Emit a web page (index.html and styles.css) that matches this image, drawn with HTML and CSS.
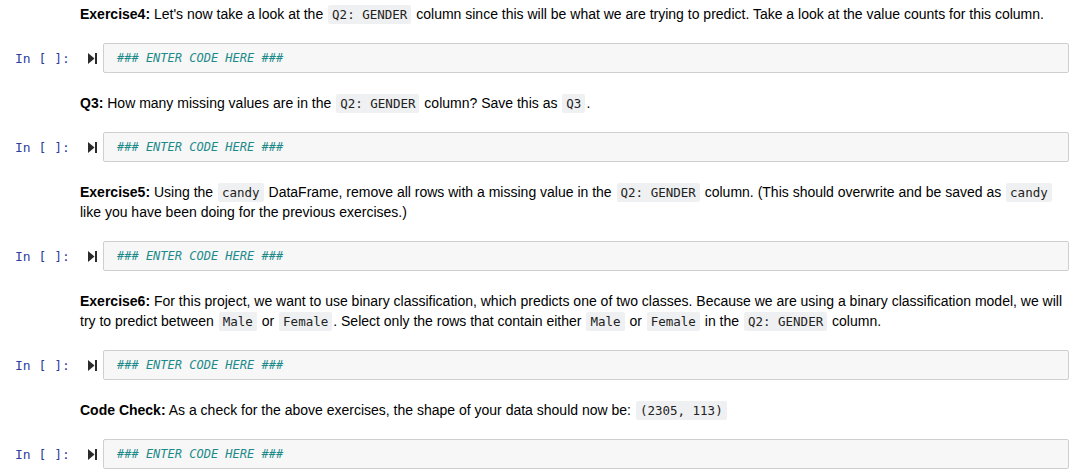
FILE: index.html
```html
<!DOCTYPE html>
<html>
<head>
<meta charset="utf-8">
<link rel="stylesheet" href="styles.css">
</head>
<body>
<div class="notebook">
  <div class="md">
    <p><b>Exercise4:</b> Let's now take a look at the <code>Q2: GENDER</code> column since this will be what we are trying to predict. Take a look at the value counts for this column.</p>
  </div>
  <div class="cell">
    <div class="prompt">In [ ]:</div>
    <svg class="run" width="9" height="11" viewBox="0 0 9 11"><path d="M0 0 L6.5 5.5 L0 11 Z" fill="#2b2b2b"/><rect x="7" y="0" width="2" height="11" fill="#2b2b2b"/></svg>
    <div class="input"><span class="cm">### ENTER CODE HERE ###</span></div>
  </div>

  <div class="md">
    <p><b>Q3:</b> How many missing values are in the <code>Q2: GENDER</code> column? Save this as <code>Q3</code>.</p>
  </div>
  <div class="cell">
    <div class="prompt">In [ ]:</div>
    <svg class="run" width="9" height="11" viewBox="0 0 9 11"><path d="M0 0 L6.5 5.5 L0 11 Z" fill="#2b2b2b"/><rect x="7" y="0" width="2" height="11" fill="#2b2b2b"/></svg>
    <div class="input"><span class="cm">### ENTER CODE HERE ###</span></div>
  </div>

  <div class="md">
    <p><b>Exercise5:</b> Using the <code>candy</code> DataFrame, remove all rows with a missing value in the <code>Q2: GENDER</code> column. (This should overwrite and be saved as <code>candy</code> like you have been doing for the previous exercises.)</p>
  </div>
  <div class="cell">
    <div class="prompt">In [ ]:</div>
    <svg class="run" width="9" height="11" viewBox="0 0 9 11"><path d="M0 0 L6.5 5.5 L0 11 Z" fill="#2b2b2b"/><rect x="7" y="0" width="2" height="11" fill="#2b2b2b"/></svg>
    <div class="input"><span class="cm">### ENTER CODE HERE ###</span></div>
  </div>

  <div class="md">
    <p><b>Exercise6:</b> For this project, we want to use binary classification, which predicts one of two classes. Because we are using a binary classification model, we will try to predict between <code>Male</code> or <code>Female</code>. Select only the rows that contain either <code>Male</code> or <code>Female</code> in the <code>Q2: GENDER</code> column.</p>
  </div>
  <div class="cell">
    <div class="prompt">In [ ]:</div>
    <svg class="run" width="9" height="11" viewBox="0 0 9 11"><path d="M0 0 L6.5 5.5 L0 11 Z" fill="#2b2b2b"/><rect x="7" y="0" width="2" height="11" fill="#2b2b2b"/></svg>
    <div class="input"><span class="cm">### ENTER CODE HERE ###</span></div>
  </div>

  <div class="md">
    <p><b>Code Check:</b> As a check for the above exercises, the shape of your data should now be: <code>(2305, 113)</code></p>
  </div>
  <div class="cell">
    <div class="prompt">In [ ]:</div>
    <svg class="run" width="9" height="11" viewBox="0 0 9 11"><path d="M0 0 L6.5 5.5 L0 11 Z" fill="#2b2b2b"/><rect x="7" y="0" width="2" height="11" fill="#2b2b2b"/></svg>
    <div class="input"><span class="cm">### ENTER CODE HERE ###</span></div>
  </div>
</div>
</body>
</html>
```

FILE: styles.css
```css
html, body {
  margin: 0;
  padding: 0;
  background: #ffffff;
}
.notebook {
  padding: 4px 8px 0 0;
  font-family: "Liberation Sans", Arial, sans-serif;
  font-size: 14px;
  color: #000000;
}
.md {
  padding-left: 80px;
  padding-right: 2px;
  margin-bottom: 19px;
}
.md p {
  margin: 0;
  line-height: 20px;
}
.md b {
  font-weight: bold;
}
.md code {
  font-family: "DejaVu Sans Mono", monospace;
  font-size: 12.5px;
  line-height: 1;
  background: #eff0f1;
  color: #222222;
  padding: 2px 4px;
  border-radius: 2px;
  margin: 0 1px;
}
.cell {
  display: flex;
  align-items: center;
  margin-bottom: 20px;
}
.prompt {
  box-sizing: border-box;
  width: 88px;
  padding-left: 15px;
  font-family: "DejaVu Sans Mono", monospace;
  font-size: 13px;
  color: #303f9f;
}
.run {
  display: block;
  margin-right: 6px;
  flex: none;
}
.input {
  flex: 1;
  box-sizing: border-box;
  height: 30px;
  display: flex;
  align-items: center;
  background: #f7f7f7;
  border: 1px solid #cfcfcf;
  border-radius: 2px;
  padding-left: 13px;
}
.cm {
  font-family: "DejaVu Sans Mono", monospace;
  font-size: 12px;
  font-style: italic;
  color: #1c8a8a;
}
```
